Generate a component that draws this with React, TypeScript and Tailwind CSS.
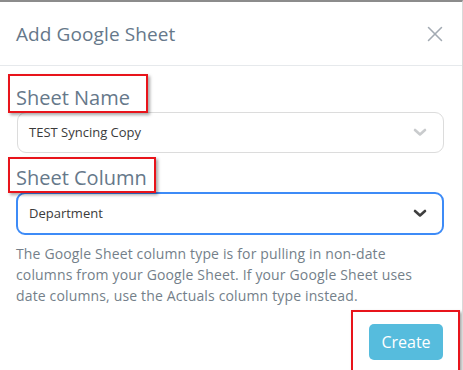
import { X } from 'lucide-react';

function Chevron({ color }: { color: string }) {
  return (
    <svg width="14" height="9" viewBox="0 0 14 9" fill="none">
      <path d="M2 2l5 4.5L12 2" stroke={color} strokeWidth="2.6" strokeLinecap="round" strokeLinejoin="round" />
    </svg>
  );
}

export default function App() {
  return (
    <div className="w-[463px] h-[370px] bg-white border-t-2 border-r border-t-[#8c8c8c] border-r-[#d9d9d9] overflow-hidden font-['Open_Sans',sans-serif] flex flex-col">
      <div className="h-[64px] shrink-0 flex items-center justify-between pl-4 pr-[14px] border-b border-[#e6e9ec]">
        <h3 className="text-[19px] text-[#66788a] tracking-[0.1px] pt-[2px]">Add Google Sheet</h3>
        <X className="w-[26px] h-[26px] text-[#a3abb3]" strokeWidth={1.4} />
      </div>

      <div className="flex-1 flex flex-col pt-2">
        <div className="relative z-10 ml-2 w-[140px] h-[39px] border-2 border-[#e8141b] shadow-[2px_2px_3px_rgba(0,0,0,0.35)] flex items-end pl-[6px] pb-[1px]">
          <span className="text-[20px] leading-none text-[#66788a] pb-[2px]">Sheet Name</span>
        </div>
        <div className="mt-[-1px] ml-[17px] mr-[18px] h-[41px] rounded-[9px] border border-[#dcdcdc] flex items-center justify-between pl-[11px] pr-[16px]">
          <span className="text-[13px] text-[#3b3b3b]">TEST Syncing Copy</span>
          <Chevron color="#c9cbcd" />
        </div>

        <div className="relative z-10 ml-2 mt-1 w-[148px] h-[36px] border-2 border-[#e8141b] shadow-[2px_2px_3px_rgba(0,0,0,0.35)] flex items-end pl-[6px] pb-[1px]">
          <span className="text-[20px] leading-none text-[#66788a] pb-[2px]">Sheet Column</span>
        </div>
        <div className="mt-[-1px] ml-4 mr-[18px] h-[43px] rounded-[9px] border-2 border-[#3d8bf7] flex items-center justify-between pl-[11px] pr-[15px]">
          <span className="text-[13px] text-[#3b3b3b]">Department</span>
          <Chevron color="#3f3f3f" />
        </div>

        <p className="mt-[8px] ml-4 w-[418px] text-[14px] leading-[21px] text-[#747f8a] tracking-[0.15px]">
          The Google Sheet column type is for pulling in non-date columns from your Google Sheet. If your Google Sheet uses date columns, use the Actuals column type instead.
        </p>

        <div className="flex justify-end">
          <div className="mt-[4px] mr-[2px] w-[109px] h-[70px] border-2 border-[#e8141b] shadow-[2px_2px_3px_rgba(0,0,0,0.35)] flex justify-end pt-[12px] pr-[15px]">
            <button className="w-[74px] h-[36px] rounded-[5px] bg-[#56bcdd] text-white text-[16px]">Create</button>
          </div>
        </div>
      </div>
    </div>
  );
}
